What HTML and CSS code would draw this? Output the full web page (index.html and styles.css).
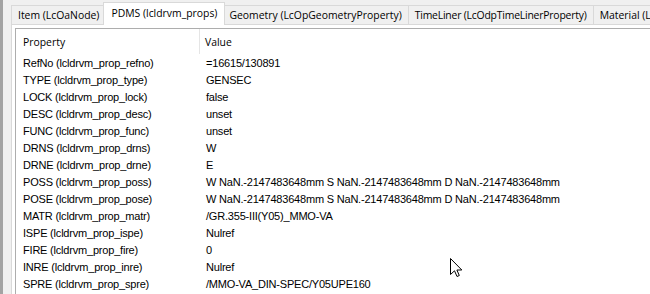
FILE: index.html
```html
<!DOCTYPE html>
<html lang="en">
<head>
    <meta charset="UTF-8">
    <title>Properties</title>
    <link rel="stylesheet" href="styles.css">
</head>
<body>
    <div class="window">
        <div class="tabs">
            <div class="tab">Item (LcOaNode)</div>
            <div class="tab active">PDMS (lcldrvm_props)</div>
            <div class="tab">Geometry (LcOpGeometryProperty)</div>
            <div class="tab narrow">TimeLiner (LcOdpTimeLinerProperty)</div>
            <div class="tab">Material (Lc</div>
        </div>

        <div class="panel">
            <div class="list">
                <div class="list-header">
                    <div class="cell prop">Property</div>
                    <div class="cell value">Value</div>
                </div>
                <div class="row"><div class="cell prop">RefNo (lcldrvm_prop_refno)</div><div class="cell value">=16615/130891</div></div>
                <div class="row"><div class="cell prop">TYPE (lcldrvm_prop_type)</div><div class="cell value">GENSEC</div></div>
                <div class="row"><div class="cell prop">LOCK (lcldrvm_prop_lock)</div><div class="cell value">false</div></div>
                <div class="row"><div class="cell prop">DESC (lcldrvm_prop_desc)</div><div class="cell value">unset</div></div>
                <div class="row"><div class="cell prop">FUNC (lcldrvm_prop_func)</div><div class="cell value">unset</div></div>
                <div class="row"><div class="cell prop">DRNS (lcldrvm_prop_drns)</div><div class="cell value">W</div></div>
                <div class="row"><div class="cell prop">DRNE (lcldrvm_prop_drne)</div><div class="cell value">E</div></div>
                <div class="row"><div class="cell prop">POSS (lcldrvm_prop_poss)</div><div class="cell value">W NaN.-2147483648mm S NaN.-2147483648mm D NaN.-2147483648mm</div></div>
                <div class="row"><div class="cell prop">POSE (lcldrvm_prop_pose)</div><div class="cell value">W NaN.-2147483648mm S NaN.-2147483648mm D NaN.-2147483648mm</div></div>
                <div class="row"><div class="cell prop">MATR (lcldrvm_prop_matr)</div><div class="cell value">/GR.355-III(Y05)_MMO-VA</div></div>
                <div class="row"><div class="cell prop">ISPE (lcldrvm_prop_ispe)</div><div class="cell value">Nulref</div></div>
                <div class="row"><div class="cell prop">FIRE (lcldrvm_prop_fire)</div><div class="cell value">0</div></div>
                <div class="row"><div class="cell prop">INRE (lcldrvm_prop_inre)</div><div class="cell value">Nulref</div></div>
                <div class="row"><div class="cell prop">SPRE (lcldrvm_prop_spre)</div><div class="cell value">/MMO-VA_DIN-SPEC/Y05UPE160</div></div>
            </div>
        </div>
    </div>

    <!-- mouse pointer sits over the list -->
    <svg class="cursor" width="13" height="20" viewBox="0 0 13 20">
        <path d="M0.5 0.5 L0.5 16.5 L4.5 12.8 L7 18.5 L9.3 17.5 L6.9 12 L11.8 12 Z" fill="#fff" stroke="#000" stroke-width="1"/>
    </svg>
</body>
</html>
```

FILE: styles.css
```css
body {
    margin: 0;
    background-color: #f0f0f0;
    overflow: hidden;
    font-family: "Open Sans", "Noto Sans", sans-serif;
    color: #000;
}
.window {
    border-left: 3px solid #a3a3a3;
    padding-left: 8px;
    height: 294px;
    width: 639px;
    overflow: hidden;
}
.tabs {
    display: flex;
    align-items: flex-end;
    height: 24px;
    position: relative;
    z-index: 1;
}
.tab {
    height: 19px;
    line-height: 18px;
    padding: 0 6px;
    font-size: 10.4px;
    white-space: nowrap;
    background-color: #f0f0f0;
    border: 1px solid #d9d9d9;
    border-bottom: none;
    box-sizing: border-box;
    margin-left: -1px;
    flex-shrink: 0;
}
.tab:first-child {
    margin-left: 0;
}
.tab.narrow {
    letter-spacing: -0.2px;
}
.tab.active {
    height: 23px;
    line-height: 20px;
    background-color: white;
    margin: 0 -2px -1px -3px;
    padding: 0 7px 2px;
    position: relative;
    z-index: 2;
}
.panel {
    background-color: white;
    border: 1px solid #d9d9d9;
    border-right: none;
    padding: 3px 0 3px 3px;
    height: 300px;
}
.list {
    border: 1px solid #adadad;
    border-right: none;
    height: 300px;
    font-family: "Liberation Sans", Arial, sans-serif;
    font-size: 11px;
    letter-spacing: -0.2px;
}
.list-header,
.row {
    display: grid;
    grid-template-columns: 184px 1fr;
    align-items: center;
}
.list-header {
    height: 25px;
    align-items: stretch;
    font-family: "Open Sans", "Noto Sans", sans-serif;
    font-size: 10.4px;
    letter-spacing: 0;
}
.list-header .cell {
    display: flex;
    align-items: center;
}
.list-header .prop {
    border-right: 1px solid #e5e5e5;
}
.row {
    height: 17px;
}
.cell {
    box-sizing: border-box;
    white-space: nowrap;
}
.cell.prop {
    padding-left: 7px;
}
.cell.value {
    padding-left: 6px;
}
.list-header .cell.value {
    padding-left: 5px;
}
.cursor {
    position: absolute;
    left: 450px;
    top: 258px;
}
```
